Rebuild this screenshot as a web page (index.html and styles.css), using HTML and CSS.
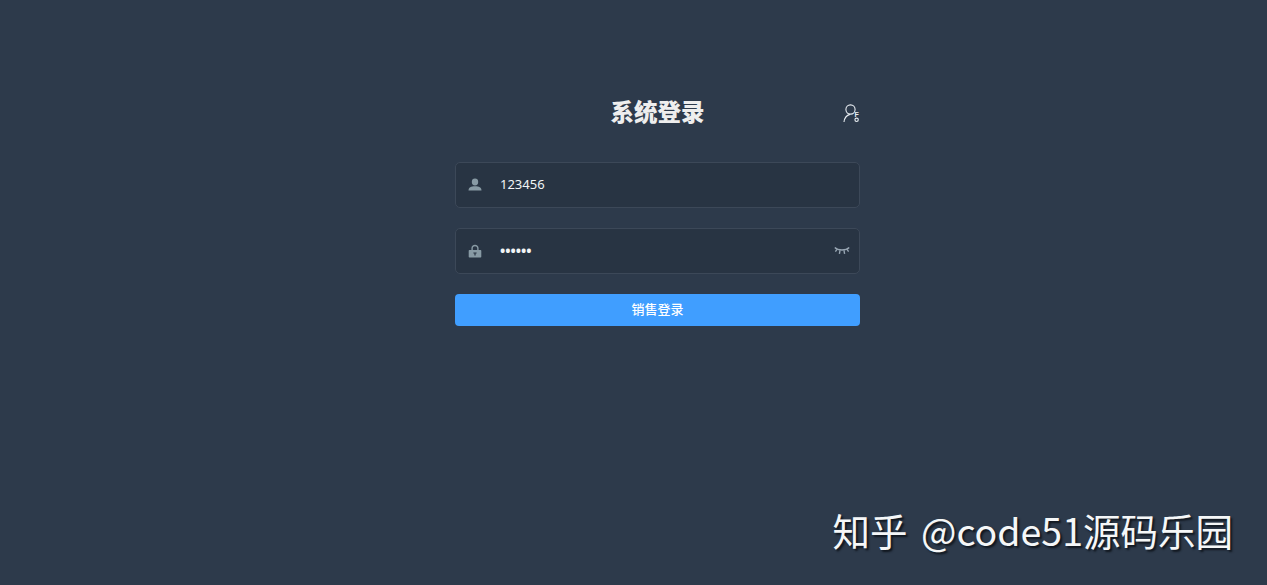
FILE: index.html
```html
<!DOCTYPE html>
<html lang="zh-CN">
<head>
    <meta charset="UTF-8">
    <meta name="viewport" content="width=device-width, initial-scale=1.0">
    <title>系统登录</title>
    <link rel="stylesheet" href="styles.css">
</head>
<body>

    <div class="login-form">
        <!-- Title -->
        <div class="title-row">
            <h3 class="title">系统登录</h3>
            <svg class="role-icon" width="20" height="20" viewBox="0 0 20 20" fill="none" stroke="#e8edf2" stroke-width="1.1">
                <circle cx="8.5" cy="6.5" r="4.6"/>
                <path d="M2 19 C2.5 14.5 5 12.2 8 11.4"/>
                <circle cx="14.6" cy="16.8" r="1.7"/>
                <text x="12.4" y="13.6" class="role-letter">F</text>
            </svg>
        </div>

        <!-- Username -->
        <div class="field">
            <svg class="field-icon" width="14" height="14" viewBox="0 0 14 14" fill="#889aa4">
                <ellipse cx="7" cy="4" rx="3.2" ry="3.4"/>
                <path d="M0.5 12.6 C0.5 9.4 3 8.2 7 8.2 C11 8.2 13.5 9.4 13.5 12.6 Z"/>
            </svg>
            <span class="field-value">123456</span>
        </div>

        <!-- Password -->
        <div class="field">
            <svg class="field-icon" width="14" height="14" viewBox="0 0 14 14" fill="#889aa4">
                <path d="M3.4 6 V4.2 C3.4 2.2 5 0.8 7 0.8 C9 0.8 10.6 2.2 10.6 4.2 V6 H9.2 V4.2 C9.2 3 8.2 2.2 7 2.2 C5.8 2.2 4.8 3 4.8 4.2 V6 Z"/>
                <path fill-rule="evenodd" d="M1.4 6 H12.6 C13 6 13.3 6.3 13.3 6.7 V12.7 C13.3 13.1 13 13.4 12.6 13.4 H1.4 C1 13.4 0.7 13.1 0.7 12.7 V6.7 C0.7 6.3 1 6 1.4 6 Z M5.4 8.4 V9.5 H6.4 V11.4 H7.6 V9.5 H8.6 V8.4 Z"/>
            </svg>
            <span class="field-value dots">••••••</span>
            <svg class="eye-icon" width="16" height="10" viewBox="0 0 16 10" fill="none" stroke="#98a6b3" stroke-width="1.4">
                <path d="M0.8 1.6 C4 4.8 12 4.8 15.2 1.6"/>
                <path d="M3 3.4 L1.4 5.6 M6 4.4 L5.4 7.8 M10 4.4 L10.6 7.8 M13 3.4 L14.6 5.6"/>
            </svg>
        </div>

        <button class="login-button">销售登录</button>
    </div>

    <!-- Watermark -->
    <div class="watermark">知乎 @code51源码乐园</div>

</body>
</html>
```

FILE: styles.css
```css
body {
    margin: 0;
    height: 585px;
    overflow: hidden;
    background-color: #2d3a4b;
    font-family: "Noto Sans", "Noto Sans CJK SC", sans-serif;
    position: relative;
}

.login-form {
    width: 405px;
    margin-left: 455px;
    padding-top: 95px;
    display: flex;
    flex-direction: column;
}

.title-row {
    height: 32px;
    margin-bottom: 35px;
    display: flex;
    justify-content: center;
    align-items: center;
    position: relative;
}

.title {
    margin: 0;
    font-size: 23.5px;
    font-weight: 900;
    color: #eeeeee;
    font-family: "Noto Sans CJK SC", sans-serif;
}

.role-icon {
    position: absolute;
    right: -2px;
    top: 8px;
}

.role-letter {
    font-size: 7px;
    font-weight: bold;
    fill: #e8edf2;
    stroke: none;
    font-family: "Liberation Sans", sans-serif;
}

.field {
    height: 44px;
    margin-bottom: 20px;
    border: 1px solid #3c4858;
    border-radius: 5px;
    background-color: #283443;
    display: flex;
    align-items: center;
    padding: 0 9px 0 12px;
    color: #f2f4f6;
}

.field-icon {
    flex: none;
}

.field-value {
    margin-left: 18px;
    font-size: 13px;
    line-height: 16px;
    margin-top: -2px;
    flex: 1;
}

.dots {
    font-size: 14px;
    margin-top: 0;
    font-weight: bold;
}

.eye-icon {
    flex: none;
}

.login-button {
    height: 32px;
    border: none;
    border-radius: 4px;
    background-color: #409eff;
    color: #ffffff;
    font-size: 13px;
    font-weight: 500;
    line-height: 28px;
    font-family: "Noto Sans CJK SC", sans-serif;
    padding: 0 0 3px;
}

.watermark {
    position: absolute;
    right: 34px;
    top: 503px;
    font-size: 37.5px;
    word-spacing: 5px;
    line-height: 54px;
    color: #f5f7f8;
    font-family: "Noto Sans CJK SC", sans-serif;
    text-shadow: 2px 2px 2px #10161e;
    white-space: nowrap;
}
```
